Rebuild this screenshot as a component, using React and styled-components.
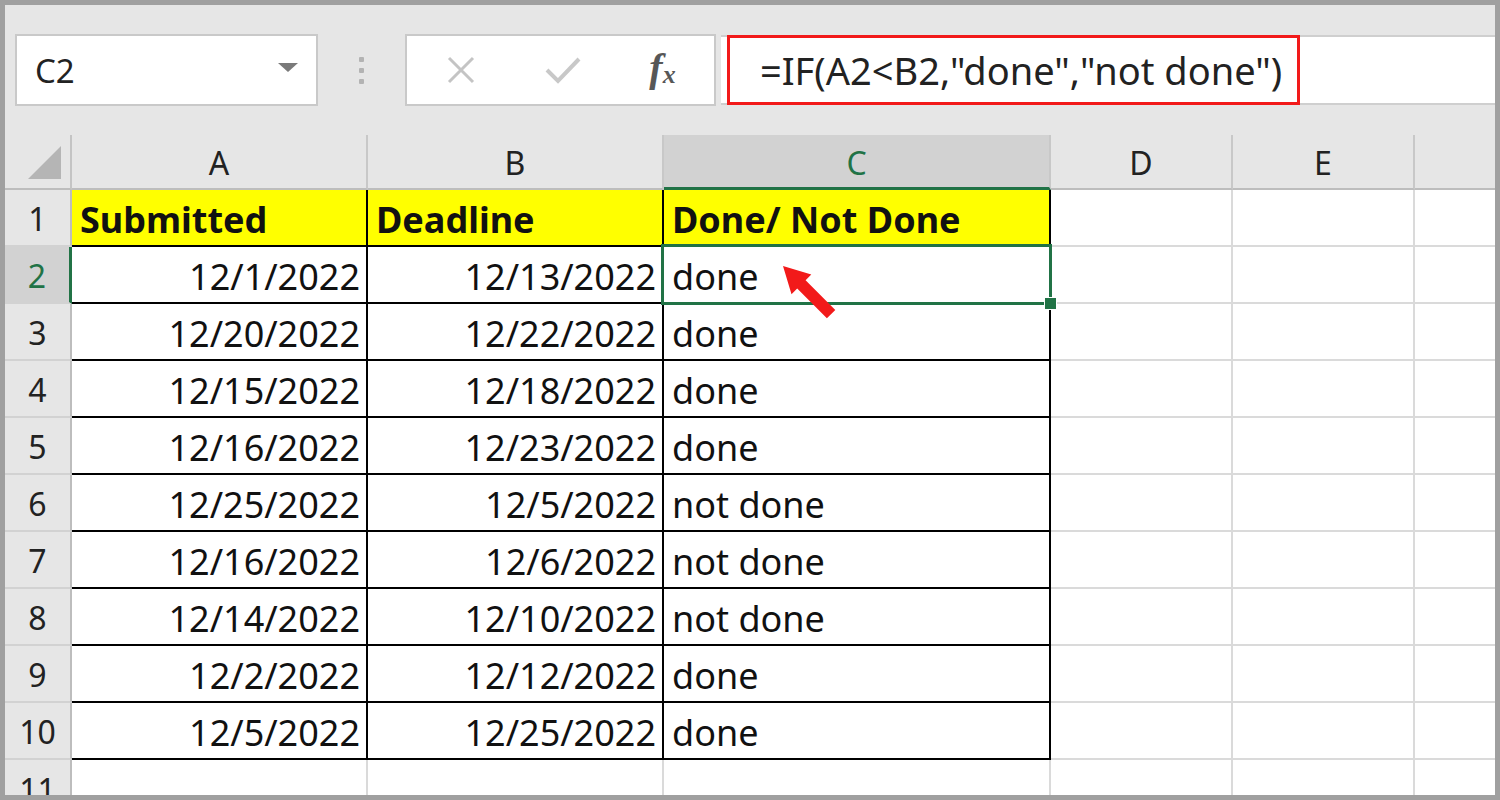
import styled, { createGlobalStyle } from "styled-components";

const GlobalStyle = createGlobalStyle`
	html, body {
		margin: 0;
		padding: 0;
		background: #ffffff;
	}
	* {
		box-sizing: border-box;
	}
`;

const GREEN = "#217346";
const FONT = `"Noto Sans", "Open Sans", sans-serif`;

const columns = ["A", "B", "C", "D", "E", ""];

const rows = [
	["Submitted", "Deadline", "Done/ Not Done"],
	["12/1/2022", "12/13/2022", "done"],
	["12/20/2022", "12/22/2022", "done"],
	["12/15/2022", "12/18/2022", "done"],
	["12/16/2022", "12/23/2022", "done"],
	["12/25/2022", "12/5/2022", "not done"],
	["12/16/2022", "12/6/2022", "not done"],
	["12/14/2022", "12/10/2022", "not done"],
	["12/2/2022", "12/12/2022", "done"],
	["12/5/2022", "12/25/2022", "done"],
];

const App = () => {
	return (
		<>
			<GlobalStyle />
			<Frame>
				<Toolbar>
					<NameBox>
						<span>C2</span>
						<svg width="20" height="10" viewBox="0 0 20 10">
							<polygon points="0,0 20,0 10,9" fill="#7a7a7a" />
						</svg>
					</NameBox>
					<Grip>
						<i />
						<i />
						<i />
					</Grip>
					<FormulaButtons>
						<IconButton>
							<svg width="30" height="30" viewBox="0 0 30 30">
								<path d="M3 3 L27 27 M27 3 L3 27" stroke="#c4c4c4" strokeWidth="3" fill="none" />
							</svg>
						</IconButton>
						<IconButton>
							<svg width="38" height="32" viewBox="0 0 38 32">
								<path d="M3 16 L14 27 L35 5" stroke="#c8c8c8" strokeWidth="4" fill="none" />
							</svg>
						</IconButton>
						<IconButton $dark>
							<FxGlyph>
								f<sub>x</sub>
							</FxGlyph>
						</IconButton>
					</FormulaButtons>
					<FormulaBar>
						<FormulaText>=IF(A2&lt;B2,"done","not done")</FormulaText>
					</FormulaBar>
				</Toolbar>

				<Sheet>
					<Corner>
						<svg width="34" height="34" viewBox="0 0 34 34">
							<polygon points="0,33 33,33 33,0" fill="#b5b5b5" />
						</svg>
					</Corner>
					{columns.map((c) => (
						<ColHead key={c || "F"} $active={c === "C"} $last={c === ""}>
							{c}
						</ColHead>
					))}

					{rows.map((r, i) => {
						const n = i + 1;
						const header = n === 1;
						return [
							<RowHead key={`h${n}`} $active={n === 2}>
								{n}
							</RowHead>,
							r.map((v, j) => (
								<Cell
									key={`${n}-${j}`}
									$align={j < 2 && !header ? "right" : "left"}
									$bold={header}
									$fill={header}
									$boxed
								>
									{v}
									{n === 2 && j === 2 && (
										<>
											<SelectionRing>
												<FillHandle />
											</SelectionRing>
											<Arrow width="70" height="70" viewBox="0 0 70 70">
												<polygon
													points="8,8 36.3,16.5 30.6,22.2 60.3,51.9 51.9,60.3 22.2,30.6 16.5,36.3"
													fill="#f21a1a"
												/>
											</Arrow>
										</>
									)}
								</Cell>
							)),
							<Cell key={`${n}-d`} />,
							<Cell key={`${n}-e`} />,
							<Cell key={`${n}-f`} $last />,
						];
					})}

					{/* row 11 is cut by the bottom of the window */}
					<RowHead $bottom>11</RowHead>
					<Cell $bottom />
					<Cell $bottom />
					<Cell $bottom />
					<Cell $bottom />
					<Cell $bottom />
					<Cell $bottom $last />
				</Sheet>
			</Frame>
		</>
	);
};

const Frame = styled.div`
	width: 1500px;
	height: 800px;
	border: 5px solid #a0a0a0;
	background: #e6e6e6;
	display: flex;
	flex-direction: column;
	overflow: hidden;
	font-family: ${FONT};
`;

const Toolbar = styled.div`
	height: 130px;
	flex: none;
	display: flex;
	align-items: center;
	padding-left: 10px;
`;

const NameBox = styled.div`
	width: 303px;
	height: 72px;
	background: #ffffff;
	border: 2px solid #c9c9c9;
	display: flex;
	align-items: center;
	justify-content: space-between;
	padding: 0 18px 0 18px;
	font-size: 33px;
	color: #222;

	svg {
		margin-top: -4px;
	}
`;

const Grip = styled.div`
	width: 87px;
	display: flex;
	flex-direction: column;
	align-items: center;
	gap: 6px;

	i {
		width: 5px;
		height: 5px;
		background: #b3b3b3;
		border-radius: 1px;
	}
`;

const FormulaButtons = styled.div`
	width: 311px;
	height: 72px;
	background: #ffffff;
	border: 2px solid #c9c9c9;
	display: grid;
	grid-template-columns: 108px 96px 1fr;
	align-items: center;
`;

const IconButton = styled.div`
	display: flex;
	align-items: center;
	justify-content: center;
	height: 100%;
	color: ${(p) => (p.$dark ? "#555" : "#c4c4c4")};
`;

const FxGlyph = styled.span`
	font-family: "Liberation Serif", "DejaVu Serif", serif;
	font-style: italic;
	font-weight: bold;
	font-size: 40px;
	line-height: 1;
	color: #575757;
	margin-top: -4px;

	sub {
		font-size: 26px;
		vertical-align: baseline;
		position: relative;
		top: 2px;
	}
`;

const FormulaBar = styled.div`
	flex: 1;
	height: 70px;
	margin-left: 5px;
	background: #ffffff;
	border-top: 2px solid #cfcfcf;
	border-bottom: 2px solid #cfcfcf;
	display: flex;
	align-items: center;
`;

const FormulaText = styled.div`
	width: 573px;
	height: 70px;
	margin-left: 6px;
	border: 3px solid #f21a1a;
	display: flex;
	align-items: center;
	padding-left: 30px;
	font-size: 38px;
	color: #222;
	white-space: nowrap;
`;

const Sheet = styled.div`
	flex: 1;
	display: grid;
	grid-template-columns: 67px 296px 296px 387px 182px 182px 1fr;
	grid-template-rows: 55px repeat(10, 57px) 1fr;
	background: #ffffff;
`;

const Corner = styled.div`
	background: #e6e6e6;
	border-right: 2px solid #c4c4c4;
	border-bottom: 2px solid #bdbdbd;
	display: flex;
	align-items: flex-end;
	justify-content: flex-end;
	padding: 0 8px 8px 0;
`;

const ColHead = styled.div`
	background: ${(p) => (p.$active ? "#d2d2d2" : "#e6e6e6")};
	color: ${(p) => (p.$active ? GREEN : "#222")};
	border-right: ${(p) => (p.$last ? "none" : "2px solid #c8c8c8")};
	border-bottom: ${(p) => (p.$active ? `3px solid ${GREEN}` : "2px solid #bdbdbd")};
	display: flex;
	align-items: center;
	justify-content: center;
	font-size: 32px;
	padding-top: 2px;
`;

const RowHead = styled.div`
	background: ${(p) => (p.$active ? "#d2d2d2" : "#e6e6e6")};
	color: ${(p) => (p.$active ? GREEN : "#222")};
	border-right: ${(p) => (p.$active ? `3px solid ${GREEN}` : "2px solid #bdbdbd")};
	border-bottom: ${(p) => (p.$bottom ? "none" : "2px solid #d2d2d2")};
	display: flex;
	align-items: ${(p) => (p.$bottom ? "flex-start" : "center")};
	justify-content: center;
	font-size: 32px;
	padding-top: ${(p) => (p.$bottom ? "8px" : "2px")};
	overflow: hidden;
`;

const Cell = styled.div`
	position: relative;
	background: ${(p) => (p.$fill ? "#ffff00" : "#ffffff")};
	border-right: ${(p) => (p.$last ? "none" : p.$boxed ? "2px solid #000" : "2px solid #dadada")};
	border-bottom: ${(p) => (p.$bottom ? "none" : p.$boxed ? "2px solid #000" : "2px solid #dadada")};
	display: flex;
	align-items: center;
	justify-content: ${(p) => (p.$align === "right" ? "flex-end" : "flex-start")};
	padding: 4px 6px 0 8px;
	font-size: 36px;
	font-weight: ${(p) => (p.$bold ? 700 : 400)};
	color: #111;
	white-space: nowrap;
`;

const SelectionRing = styled.div`
	position: absolute;
	left: -3px;
	top: -3px;
	right: -3px;
	bottom: -3px;
	border: 3px solid ${GREEN};
	z-index: 2;
	pointer-events: none;
`;

const FillHandle = styled.div`
	position: absolute;
	right: -8px;
	bottom: -8px;
	width: 13px;
	height: 13px;
	background: ${GREEN};
	border: 1px solid #ffffff;
`;

const Arrow = styled.svg`
	position: absolute;
	left: 111px;
	top: 11px;
	z-index: 3;
`;

export default App;
